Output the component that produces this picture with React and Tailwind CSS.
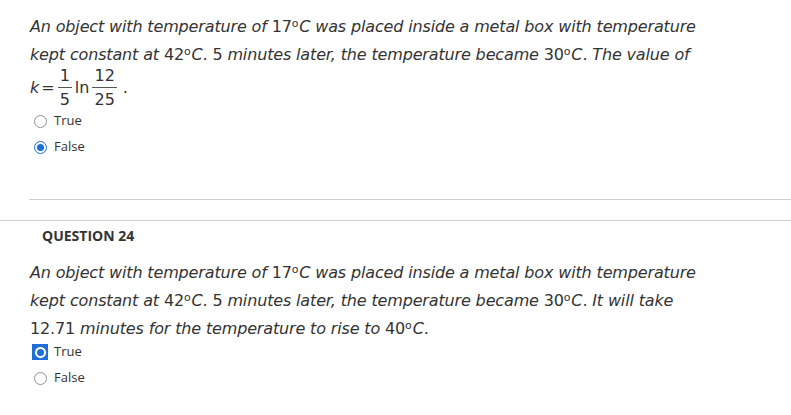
import React from "react";

const body = { fontFamily: '"DejaVu Sans", sans-serif' };
const ui = { fontFamily: '"Open Sans", sans-serif' };

function Radio({ checked, focused }) {
  const circle = checked ? (
    <span className="flex h-[13px] w-[13px] items-center justify-center rounded-full border-[1.5px] border-[#1a6fd8] bg-white">
      <span className="h-[7px] w-[7px] rounded-full bg-[#1a6fd8]" />
    </span>
  ) : (
    <span className="h-[13px] w-[13px] rounded-full border border-[#8f8f8f] bg-white" />
  );
  if (focused) {
    return (
      <span className="flex h-[16px] w-[16px] items-center justify-center bg-[#1f6fd6]">
        {circle}
      </span>
    );
  }
  return <span className="flex h-[16px] w-[16px] items-center justify-center">{circle}</span>;
}

function Option({ label, checked, focused }) {
  return (
    <div className="flex h-[26px] items-center gap-[6px] pl-[2px]">
      <Radio checked={checked} focused={focused} />
      <span className="text-[13px] text-[#333]" style={ui}>{label}</span>
    </div>
  );
}

function Frac({ n, d }) {
  return (
    <span className="mx-[3px] inline-flex flex-col items-center text-[16px] leading-none">
      <span className="px-[2px] pb-[3px]">{n}</span>
      <span className="w-full border-t border-[#555]" />
      <span className="px-[2px] pt-[4px]">{d}</span>
    </span>
  );
}

function Deg() {
  return <sup className="mr-[1px] text-[11px]">o</sup>;
}

export default function App() {
  return (
    <div className="min-h-[415px] w-[791px] bg-white text-[#333]">
      <div className="pl-[30px] pt-[13px]" style={body}>
        <p className="text-[16px] leading-[28px] tracking-[-0.15px]">
          <i>An object with temperature of </i>17<Deg /><i>C was placed inside a metal box with temperature</i>
          <br />
          <i>kept constant at </i>42<Deg /><i>C</i>. 5 <i>minutes later, the temperature became </i>30<Deg /><i>C</i>. <i>The value of</i>
        </p>
        <div className="mt-[-1px] flex h-[40px] items-center text-[16px]">
          <i>k</i>
          <span className="ml-[2px]">=</span>
          <Frac n="1" d="5" />
          <span>ln</span>
          <Frac n="12" d="25" />
          <span className="ml-[3px]">.</span>
        </div>
        <div>
          <Option label="True" />
          <Option label="False" checked />
        </div>
      </div>
      <div className="ml-[29px] mt-[39px] border-t border-[#cfcfcf]" />
      <div className="mt-[20px] border-t border-[#cfcfcf]" />
      <div className="pl-[42px] pt-[5px] text-[14px] font-bold leading-[20px] text-[#333]" style={ui}>
        QUESTION 24
      </div>
      <div className="pl-[30px] pt-[13px]" style={body}>
        <p className="text-[16px] leading-[28px] tracking-[-0.15px]">
          <i>An object with temperature of </i>17<Deg /><i>C was placed inside a metal box with temperature</i>
          <br />
          <i>kept constant at </i>42<Deg /><i>C</i>. 5 <i>minutes later, the temperature became </i>30<Deg /><i>C</i>. <i>It will take</i>
          <br />
          12.71 <i>minutes for the temperature to rise to </i>40<Deg /><i>C</i>.
        </p>
        <div className="mt-[-4px]">
          <Option label="True" checked focused />
          <Option label="False" />
        </div>
      </div>
    </div>
  );
}
